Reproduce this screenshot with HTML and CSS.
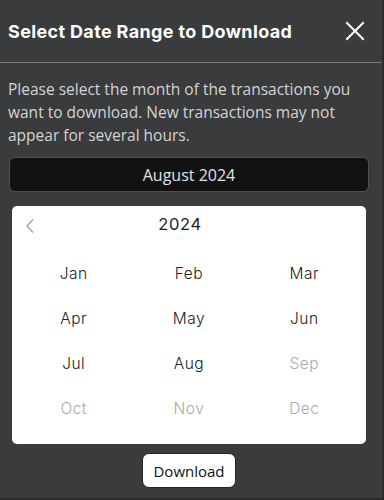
FILE: index.html
```html
<!DOCTYPE html>
<html>
<head>
<meta charset="utf-8">
<link rel="stylesheet" href="styles.css">
</head>
<body>
<div class="page">
  <div class="dialog">
    <div class="header">
      <h1 class="title">Select Date Range to Download</h1>
      <button class="close" aria-label="Close">
        <svg width="20" height="20" viewBox="0 0 20 20"><path d="M2 2 L18 18 M18 2 L2 18" stroke="#fff" stroke-width="2" stroke-linecap="square" fill="none"/></svg>
      </button>
    </div>
    <div class="body">
      <p class="desc">Please select the month of the transactions you want to download. New transactions may not appear for several hours.</p>
      <div class="field">August 2024</div>
      <div class="calendar">
        <div class="cal-head">
          <span class="prev"><svg width="8" height="14" viewBox="0 0 8 14"><path d="M7 0.5 L1 7 L7 13.5" stroke="#9a9a9a" stroke-width="1.2" fill="none"/></svg></span>
          <span class="year">2024</span>
        </div>
        <div class="months">
          <span class="m">Jan</span><span class="m">Feb</span><span class="m">Mar</span>
          <span class="m">Apr</span><span class="m">May</span><span class="m">Jun</span>
          <span class="m">Jul</span><span class="m">Aug</span><span class="m off">Sep</span>
          <span class="m off">Oct</span><span class="m off">Nov</span><span class="m off">Dec</span>
        </div>
      </div>
      <div class="actions"><button class="download">Download</button></div>
    </div>
  </div>
</div>
</body>
</html>
```
FILE: styles.css
```css
html, body { margin: 0; padding: 0; }
body { background: #2a2b2d; width: 384px; height: 500px; overflow: hidden; }
.page { width: 384px; height: 500px; }
.dialog {
  width: 382px; height: 498px; background: #3a3b3d; box-sizing: border-box;
  display: flex; flex-direction: column;
}
.header {
  height: 63px; display: flex; align-items: center; justify-content: space-between;
  padding: 0 17px 0 8px; border-bottom: 1px solid #7c7d80; box-sizing: border-box;
}
.title {
  margin: 0; color: #fff; font-family: "Inter", sans-serif; font-weight: 700; font-size: 18px;
  letter-spacing: 0.35px;
}
.close { background: none; border: 0; padding: 0; width: 20px; height: 20px; display: flex; }
.body { padding: 15px 12px 0 8px; display: flex; flex-direction: column; }
.desc {
  margin: 0; color: #d4d4d4; font-family: "Open Sans", sans-serif; font-size: 15.5px; line-height: 23px;
}
.field {
  margin: 10px 1px 0 1px; background: #121212; border: 1px solid #505050; border-radius: 6px;
  color: #e2e2e2; font-family: "Open Sans", sans-serif; font-size: 16px; display: flex; align-items: center; justify-content: center;
  box-sizing: border-box; height: 35px;
}
.calendar {
  margin: 14px 4px 0 4px; background: #fff; border-radius: 5px; height: 238px; box-sizing: border-box;
  padding: 7px 4px 0 4px;
  font-family: "Inter", sans-serif;
}
.cal-head { position: relative; height: 22px; display: flex; justify-content: center; align-items: center; }
.prev { position: absolute; left: 10px; top: 6px; display: flex; }
.year { font-size: 16.5px; color: #1e1e1e; letter-spacing: 0.6px; margin-right: 18px; }
.months {
  display: grid; grid-template-columns: repeat(3, 1fr); grid-auto-rows: 45px; margin-top: 16px;
}
.m { display: flex; align-items: center; justify-content: center; font-size: 15.5px; font-weight: 350; color: #222; letter-spacing: 0.5px; }
.m.off { color: #a9a9a9; }
.actions { display: flex; justify-content: center; margin-top: 9px; }
.download {
  background: #fff; border: 1px solid #222; border-radius: 7px; height: 35px; padding: 0 10px;
  font-family: "Open Sans", sans-serif; font-size: 15px; color: #111;
}
```
